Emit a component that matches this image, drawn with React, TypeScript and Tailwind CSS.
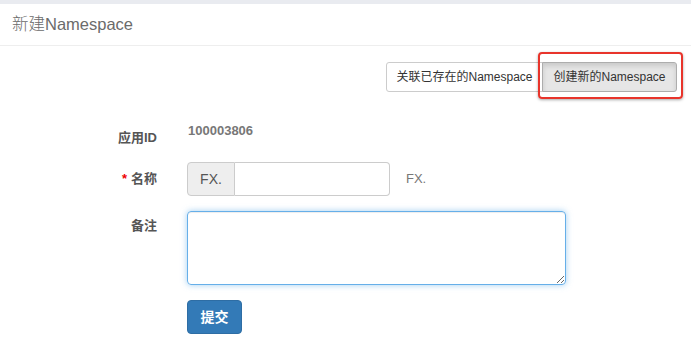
import React from "react";

const font = { fontFamily: '"Liberation Sans", Arial, "Noto Sans CJK SC", sans-serif' };

export default function App() {
  return (
    <div className="w-[691px] h-[364px] bg-white text-[#333] overflow-hidden" style={font}>
      {/* top strip */}
      <div className="h-1 bg-[#e9ebf0]" />

      {/* Header */}
      <div className="h-[42px] border-b border-[#eeeeee] flex items-center px-3">
        <h3 className="text-[16.5px] text-[#6b6b6b] font-light">新建Namespace</h3>
      </div>

      {/* Button group */}
      <div className="flex justify-end pr-[14px] mt-4">
        <button className="h-[30px] w-[157px] text-[12px] bg-white border border-[#cccccc] rounded-l-[3px] text-[#333] whitespace-nowrap">
          关联已存在的Namespace
        </button>
        <div className="relative -ml-px">
          <button className="h-[30px] w-[135px] text-[12px] bg-[#e6e6e6] border border-[#adadad] rounded-r-[3px] text-[#333] whitespace-nowrap shadow-[inset_0_3px_5px_rgba(0,0,0,0.125)]">
            创建新的Namespace
          </button>
          <span className="absolute -left-[4px] -right-[6px] -top-[10px] -bottom-[7px] border-[2.5px] border-[#e8342b] rounded-[4px] shadow-[0_1px_3px_rgba(0,0,0,0.35)] pointer-events-none" />
        </div>
      </div>

      {/* Form */}
      <div className="mt-[32px]">
        {/* 应用ID */}
        <div className="flex items-start h-[20px]">
          <label className="w-[157px] text-right pt-[7px] leading-[14px] text-[13px] font-bold text-[#555]">
            应用ID
          </label>
          <div className="ml-[31px] leading-[14px] text-[13px] font-bold text-[#777]">100003806</div>
        </div>

        {/* 名称 */}
        <div className="flex items-start mt-[18px]">
          <label className="w-[157px] text-right leading-[34px] text-[13px] font-bold text-[#555]">
            <span className="text-[#e00] mr-[4px]">*</span>名称
          </label>
          <div className="ml-[30px] flex h-[34px] w-[203px]">
            <span className="w-[48px] flex items-center justify-center bg-[#eeeeee] border border-[#cccccc] rounded-l-[4px] text-[14px] text-[#555]">
              FX.
            </span>
            <input className="flex-1 min-w-0 border border-l-0 border-[#cccccc] rounded-r-[4px] px-3 text-[14px] outline-none" />
          </div>
          <span className="ml-[16px] leading-[34px] text-[13px] text-[#777]">FX.</span>
        </div>

        {/* 备注 */}
        <div className="flex items-start mt-[15px]">
          <label className="w-[157px] text-right pt-[8px] leading-[14px] text-[13px] font-bold text-[#555]">
            备注
          </label>
          <textarea className="ml-[30px] w-[379px] h-[74px] border border-[#66afe9] rounded-[4px] outline-none shadow-[inset_0_1px_1px_rgba(0,0,0,0.075),0_0_6px_rgba(102,175,233,0.6)] resize px-3 py-1.5 text-[14px]" />
        </div>

        {/* 提交 */}
        <div className="flex mt-[15px]">
          <div className="w-[157px]" />
          <button className="ml-[30px] w-[55px] h-[34px] bg-[#337ab7] border border-[#2e6da4] rounded-[4px] text-white text-[14px] font-bold">
            提交
          </button>
        </div>
      </div>
    </div>
  );
}
